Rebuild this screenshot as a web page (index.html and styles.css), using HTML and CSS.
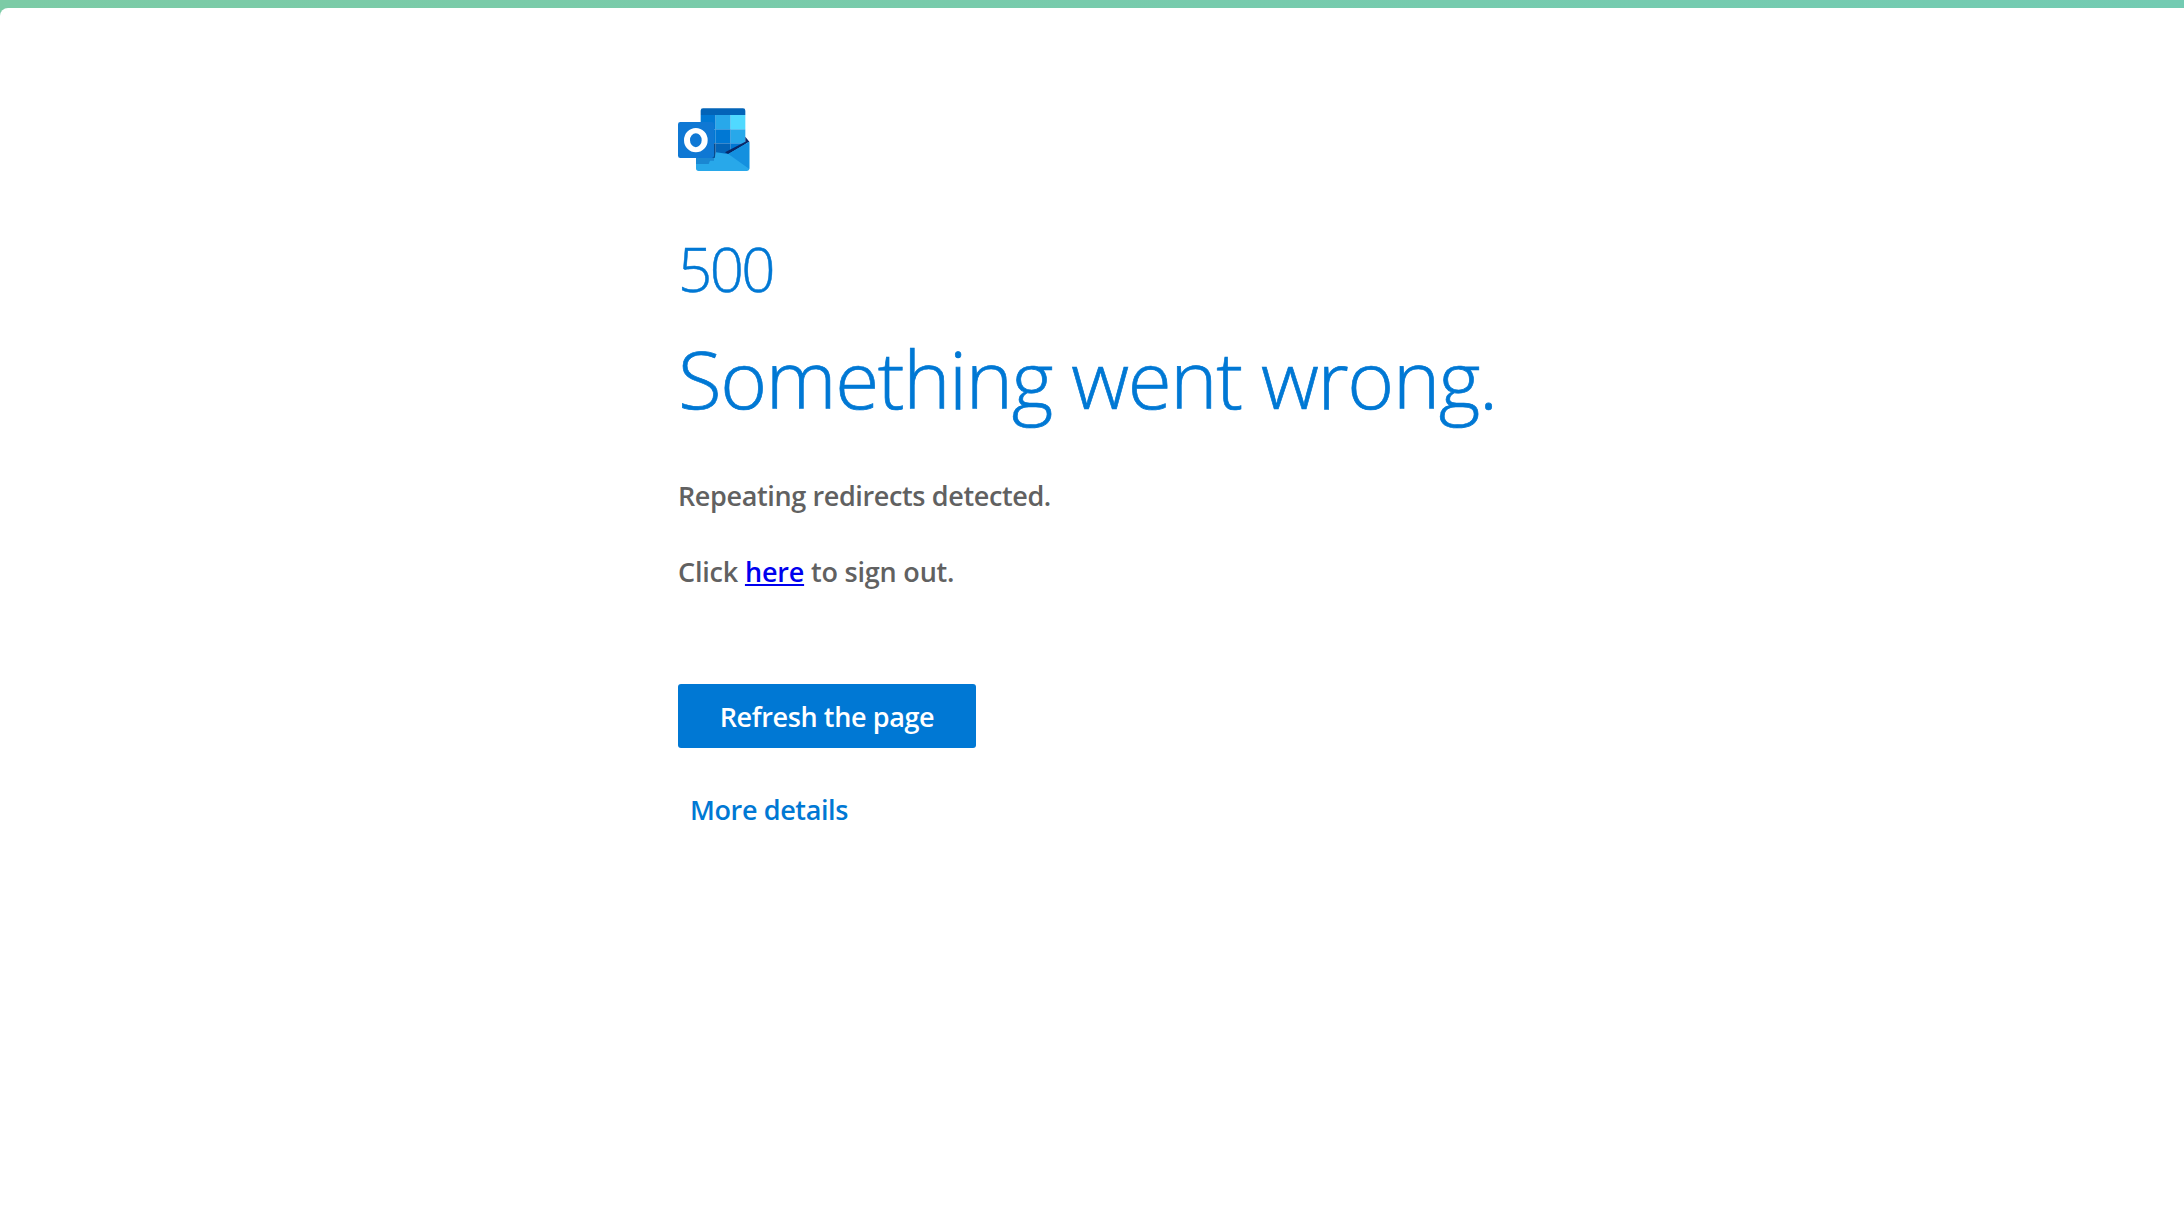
FILE: index.html
```html
<!DOCTYPE html>
<html lang="en">
<head>
  <meta charset="UTF-8">
  <title>Outlook</title>
  <link rel="stylesheet" href="styles.css">
</head>
<body>
  <div class="topbar"></div>
  <div class="page">
    <div class="content">
      <!-- Outlook logo -->
      <svg class="logo" viewBox="54 54 216 192" width="72" height="64" aria-label="Outlook">
        <path d="M122 62a7 7 0 0 1 7-7h120a7 7 0 0 1 7 7v13H122z" fill="#0364b8"/>
        <rect x="122" y="75" width="45" height="43" fill="#0078d4"/>
        <rect x="167" y="75" width="45" height="43" fill="#28a8ea"/>
        <rect x="212" y="75" width="44" height="43" fill="#50d9ff"/>
        <rect x="122" y="118" width="45" height="42" fill="#0078d4"/>
        <rect x="167" y="118" width="45" height="42" fill="#0078d4"/>
        <rect x="212" y="118" width="44" height="42" fill="#28a8ea"/>
        <rect x="122" y="160" width="45" height="46" fill="#064a8c"/>
        <rect x="167" y="160" width="45" height="40" fill="#0364b8"/>
        <rect x="212" y="160" width="44" height="36" fill="#0078d4"/>
        <path d="M256 140l12 15-63 38-10-6 61-32z" fill="#0a2767"/>
        <path d="M108 204h56l4-17 37 5 63-37v80a8 8 0 0 1-8 8H116a8 8 0 0 1-8-8z" fill="#28a8ea"/>
        <path d="M205 192l63-37v82z" fill="#1490df"/>
        <path d="M108 204h54v8h-12l-4 10h-38z" fill="#0f6cbd" opacity=".55"/>
        <rect x="54" y="96" width="108" height="108" rx="7" fill="#0f78d4"/>
        <path fill="#fff" fill-rule="evenodd" d="M72 150.500a35.500 36.500 0 1 0 71 0a35.500 36.500 0 1 0-71 0zM90 150.500a17.500 21 0 1 0 35 0a17.500 21 0 1 0-35 0z"/>
      </svg>

      <div class="code">500</div>
      <h1 class="title">Something went wrong.</h1>
      <p class="msg">Repeating redirects detected.</p>
      <p class="msg msg-signout">Click <a href="#">here</a> to sign out.</p>

      <button class="btn">Refresh the page</button>
      <div class="more">More details</div>
    </div>
  </div>
</body>
</html>
```

FILE: styles.css
```css
* { margin: 0; padding: 0; box-sizing: border-box; }

html, body { height: 100%; }

body {
  font-family: 'Open Sans', sans-serif;
  background: linear-gradient(90deg, #7ccba6, #73cbb2);
  display: flex;
  flex-direction: column;
  overflow: hidden;
}

.topbar { height: 8px; flex: none; }

.page {
  flex: 1;
  background: #fff;
  border-top-left-radius: 8px;
  padding: 100px 0 0 678px;
}

.logo { display: block; }

.code {
  font-size: 60px;
  font-weight: 300;
  letter-spacing: -2.6px;
  line-height: 80px;
  color: #0078d4;
  margin-top: 57px;
  -webkit-text-stroke: 0.5px #0078d4;
}

.title {
  font-size: 80px;
  font-weight: 300;
  letter-spacing: -1.35px;
  line-height: 110px;
  color: #0078d4;
  margin-top: 14px;
  -webkit-text-stroke: 0.7px #0078d4;
}

.msg {
  font-size: 27px;
  font-weight: 600;
  letter-spacing: -0.37px;
  line-height: 36px;
  color: #616161;
}

.title + .msg { margin-top: 45px; }

.msg-signout { margin-top: 40px; letter-spacing: -0.19px; }

.msg a { color: #0000ee; }

.btn {
  display: block;
  width: 298px;
  height: 64px;
  margin-top: 94px;
  background: #0078d4;
  color: #fff;
  border: none;
  border-radius: 3px;
  font-family: inherit;
  font-size: 27px;
  font-weight: 600;
  letter-spacing: -0.37px;
}

.more {
  font-size: 27px;
  font-weight: 600;
  letter-spacing: -0.37px;
  line-height: 36px;
  color: #0078d4;
  margin: 44px 0 0 12px;
}
```
